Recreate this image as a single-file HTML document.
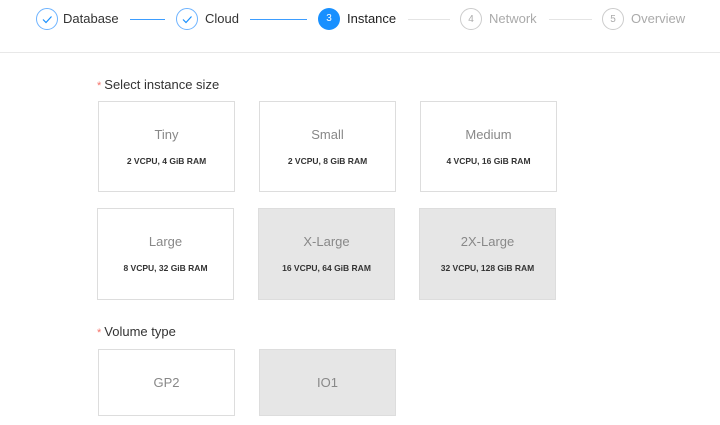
<!DOCTYPE html><html><head><style>
body{margin:0;width:720px;height:425px;background:#fff;font-family:"Liberation Sans",sans-serif;position:relative;overflow:hidden}
.a{position:absolute}
.c{position:absolute;width:22px;height:22px;border-radius:50%;box-sizing:border-box;top:8px;font-size:10px;text-align:center;line-height:21px}
.t{position:absolute;top:11px;font-size:13px;line-height:16px}
.l{position:absolute;top:19px;height:0;border-top:1px solid}
.b{position:absolute;border:1px solid #ddd;box-sizing:border-box;background:#fff;text-align:center}
.b .n{position:absolute;left:0;right:0;top:25px;font-size:13px;color:#888}
.b .s{position:absolute;left:0;right:0;top:54px;font-size:8.5px;font-weight:bold;color:#333}
.g{background:#e6e6e6}
.lab{position:absolute;font-size:13px;color:#333}
.lab span{color:#f5736a;font-size:11px;margin-right:3px}
</style></head><body>
<div class="c" style="left:36px;border:1px solid #6db3ff"><svg width="20" height="20" viewBox="0 0 20 20"><path d="M6 10.5l3 3 5.5-6" stroke="#1890ff" stroke-width="1.2" fill="none"/></svg></div>
<div class="t" style="left:63px;color:#333">Database</div>
<div class="l" style="left:130px;width:35px;border-color:#3d9dff"></div>
<div class="c" style="left:176px;border:1px solid #6db3ff"><svg width="20" height="20" viewBox="0 0 20 20"><path d="M6 10.5l3 3 5.5-6" stroke="#1890ff" stroke-width="1.2" fill="none"/></svg></div>
<div class="t" style="left:205px;color:#333">Cloud</div>
<div class="l" style="left:250px;width:57px;border-color:#3d9dff"></div>
<div class="c" style="left:318px;background:#1890ff;color:#fff">3</div>
<div class="t" style="left:347px;color:#222">Instance</div>
<div class="l" style="left:408px;width:42px;border-color:#e4e4e4"></div>
<div class="c" style="left:460px;border:1px solid #ccc;color:#aaa">4</div>
<div class="t" style="left:489px;color:#aaa">Network</div>
<div class="l" style="left:549px;width:43px;border-color:#e4e4e4"></div>
<div class="c" style="left:602px;border:1px solid #ccc;color:#aaa">5</div>
<div class="t" style="left:631px;color:#aaa">Overview</div>
<div class="a" style="left:0;right:0;top:52px;height:1px;background:#e8e8e8"></div>
<div class="lab" style="left:97px;top:77px"><span>*</span>Select instance size</div>
<div class="b" style="left:98px;top:101px;width:137px;height:91px"><div class="n">Tiny</div><div class="s">2 VCPU, 4 GiB RAM</div></div>
<div class="b" style="left:259px;top:101px;width:137px;height:91px"><div class="n">Small</div><div class="s">2 VCPU, 8 GiB RAM</div></div>
<div class="b" style="left:420px;top:101px;width:137px;height:91px"><div class="n">Medium</div><div class="s">4 VCPU, 16 GiB RAM</div></div>
<div class="b" style="left:97px;top:208px;width:137px;height:92px"><div class="n">Large</div><div class="s">8 VCPU, 32 GiB RAM</div></div>
<div class="b g" style="left:258px;top:208px;width:137px;height:92px"><div class="n">X-Large</div><div class="s">16 VCPU, 64 GiB RAM</div></div>
<div class="b g" style="left:419px;top:208px;width:137px;height:92px"><div class="n">2X-Large</div><div class="s">32 VCPU, 128 GiB RAM</div></div>
<div class="lab" style="left:97px;top:324px"><span>*</span>Volume type</div>
<div class="b" style="left:98px;top:349px;width:137px;height:67px"><div class="n" style="top:25px">GP2</div></div>
<div class="b g" style="left:259px;top:349px;width:137px;height:67px"><div class="n" style="top:25px">IO1</div></div>
</body></html>
